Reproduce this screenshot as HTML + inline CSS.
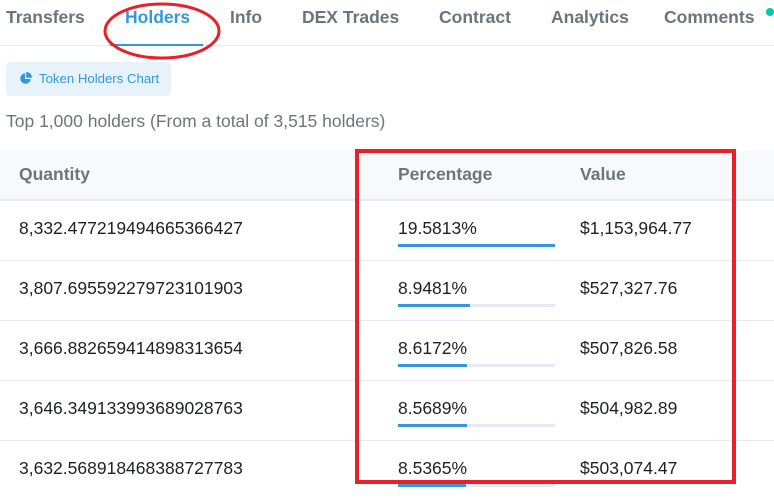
<!DOCTYPE html><html><head><style>
body{margin:0;width:774px;height:491px;overflow:hidden;background:#fff;font-family:"Liberation Sans",sans-serif;position:relative}
.t{position:absolute;top:7px;font-size:17.5px;font-weight:bold;color:#6c757d}
.row{position:absolute;left:0;width:774px;height:60px;border-top:1px solid #e7eaf3}
.c{position:absolute;font-size:17.5px;color:#1e2022}
.bar{position:absolute;left:398px;width:157px;height:3px;background:#e7eaf3}
.bar i{display:block;height:3px;background:#3498db}
</style></head><body>
<div class="t" style="left:6px">Transfers</div>
<div class="t" style="left:125px;color:#3498db">Holders</div>
<div class="t" style="left:230px">Info</div>
<div class="t" style="left:302px">DEX Trades</div>
<div class="t" style="left:439px">Contract</div>
<div class="t" style="left:551px">Analytics</div>
<div class="t" style="left:664px">Comments</div>
<div style="position:absolute;left:766px;top:8px;width:8px;height:8px;border-radius:50%;background:#00c9a7"></div>
<div style="position:absolute;left:0;top:45px;width:774px;height:1px;background:#e7eaf3"></div>
<div style="position:absolute;left:110px;top:44px;width:93px;height:2px;background:#3498db"></div>
<div style="position:absolute;left:6px;top:62px;width:165px;height:34px;background:#e7f2fb;border-radius:4px"></div>
<svg style="position:absolute;left:19px;top:72px" width="13" height="13" viewBox="0 0 13 13"><path d="M6 1.2A5.3 5.3 0 1 0 11.8 7H6Z" fill="#3498db"/><path d="M7.2 0A5.5 5.5 0 0 1 13 5.8H7.2Z" fill="#3498db"/></svg>
<div style="position:absolute;left:39px;top:71px;font-size:13.2px;color:#3498db">Token Holders Chart</div>
<div style="position:absolute;left:6px;top:111px;font-size:17.5px;color:#6c757d">Top 1,000 holders (From a total of 3,515 holders)</div>
<div style="position:absolute;left:0;top:150px;width:774px;height:49px;background:#f8f9fd;border-bottom:2px solid #e7eaf3"></div>
<div class="c" style="left:19px;top:164px;font-weight:bold;color:#6c757d">Quantity</div>
<div class="c" style="left:398px;top:164px;font-weight:bold;color:#6c757d">Percentage</div>
<div class="c" style="left:580px;top:164px;font-weight:bold;color:#6c757d">Value</div>
<div class="row" style="top:200px;border-top:0"></div>
<div class="row" style="top:260px"></div>
<div class="row" style="top:320px"></div>
<div class="row" style="top:380px"></div>
<div class="row" style="top:440px"></div>
<div class="c" style="left:19px;top:218px">8,332.477219494665366427</div><div class="c" style="left:398px;top:218px">19.5813%</div><div class="c" style="left:580px;top:218px">$1,153,964.77</div><div class="bar" style="top:244px"><i style="width:100%"></i></div>
<div class="c" style="left:19px;top:278px">3,807.695592279723101903</div><div class="c" style="left:398px;top:278px">8.9481%</div><div class="c" style="left:580px;top:278px">$527,327.76</div><div class="bar" style="top:304px"><i style="width:72px"></i></div>
<div class="c" style="left:19px;top:338px">3,666.882659414898313654</div><div class="c" style="left:398px;top:338px">8.6172%</div><div class="c" style="left:580px;top:338px">$507,826.58</div><div class="bar" style="top:364px"><i style="width:69px"></i></div>
<div class="c" style="left:19px;top:398px">3,646.349133993689028763</div><div class="c" style="left:398px;top:398px">8.5689%</div><div class="c" style="left:580px;top:398px">$504,982.89</div><div class="bar" style="top:424px"><i style="width:69px"></i></div>
<div class="c" style="left:19px;top:458px">3,632.568918468388727783</div><div class="c" style="left:398px;top:458px">8.5365%</div><div class="c" style="left:580px;top:458px">$503,074.47</div><div class="bar" style="top:484px"><i style="width:68px"></i></div>
<svg style="position:absolute;left:0;top:0" width="774" height="491"><ellipse cx="162" cy="31" rx="57" ry="27" fill="none" stroke="#e8202a" stroke-width="3"/><rect x="357" y="151" width="377" height="331" fill="none" stroke="#e8202a" stroke-width="4"/></svg>
</body></html>
